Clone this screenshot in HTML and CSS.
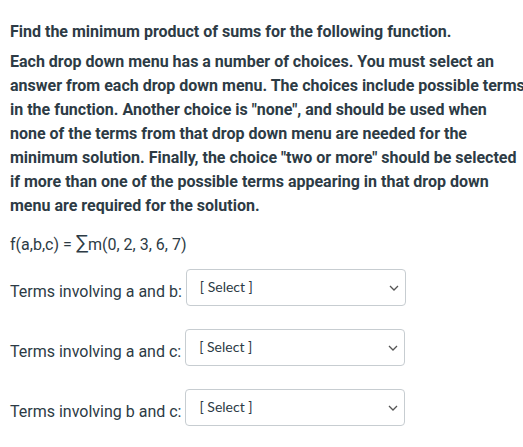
FILE: index.html
```html
<!DOCTYPE html>
<html>
<head>
<meta charset="utf-8">
<link rel="stylesheet" href="styles.css">
</head>
<body>
<div class="question">
  <p class="title">Find the minimum product of sums for the following function.</p>
  <p class="intro">Each drop down menu has a number of choices. You must select an<br>answer from each drop down menu. The choices include possible terms<br>in the function. Another choice is "none", and should be used when<br>none of the terms from that drop down menu are needed for the<br>minimum solution. Finally, the choice "two or more" should be selected<br>if more than one of the possible terms appearing in that drop down<br>menu are required for the solution.</p>
  <p class="func">f(a,b,c) = <span class="sigma">∑</span>m(0, 2, 3, 6, 7)</p>
  <div class="row">
    <span class="label">Terms involving a and b:</span>
    <div class="select"><span class="sel-text">[ Select ]</span><svg class="chev" width="10" height="6" viewBox="0 0 10 6"><path d="M1 1l4 4 4-4" fill="none" stroke="#555" stroke-width="1.3"/></svg></div>
  </div>
  <div class="row">
    <span class="label">Terms involving a and c:</span>
    <div class="select"><span class="sel-text">[ Select ]</span><svg class="chev" width="10" height="6" viewBox="0 0 10 6"><path d="M1 1l4 4 4-4" fill="none" stroke="#555" stroke-width="1.3"/></svg></div>
  </div>
  <div class="row">
    <span class="label">Terms involving b and c:</span>
    <div class="select"><span class="sel-text">[ Select ]</span><svg class="chev" width="10" height="6" viewBox="0 0 10 6"><path d="M1 1l4 4 4-4" fill="none" stroke="#555" stroke-width="1.3"/></svg></div>
  </div>
</div>
</body>
</html>
```
FILE: styles.css
```css
html, body {
  margin: 0;
  padding: 0;
  background: #fff;
  overflow: hidden;
}
body {
  font-family: Roboto, "Liberation Sans", sans-serif;
  color: #2d3b45;
  font-size: 16px;
  line-height: 24px;
}
.question {
  padding: 20px 0 0 10px;
}
p {
  margin: 0;
}
.title {
  font-weight: 700;
}
.intro {
  margin-top: 6px;
  margin-right: -20px;
  white-space: nowrap;
  font-weight: 700;
}
.func {
  margin-top: 13px;
}
.sigma {
  font-size: 21px;
}
.row {
  display: flex;
  align-items: center;
  margin-top: 12px;
}
.row + .row {
  margin-top: 23px;
}
.label {
  margin-right: 4px;
  padding-top: 8px;
}
.select {
  height: 35px;
  width: 199px;
  border: 1px solid #c7cdd1;
  border-radius: 4px;
  display: flex;
  align-items: center;
  justify-content: space-between;
  padding: 0 6px 0 13px;
  font-family: Lato, "Open Sans", sans-serif;
  font-size: 14px;
}
.sel-text {
  margin-top: -2px;
}
.chev {
  display: block;
}
```
